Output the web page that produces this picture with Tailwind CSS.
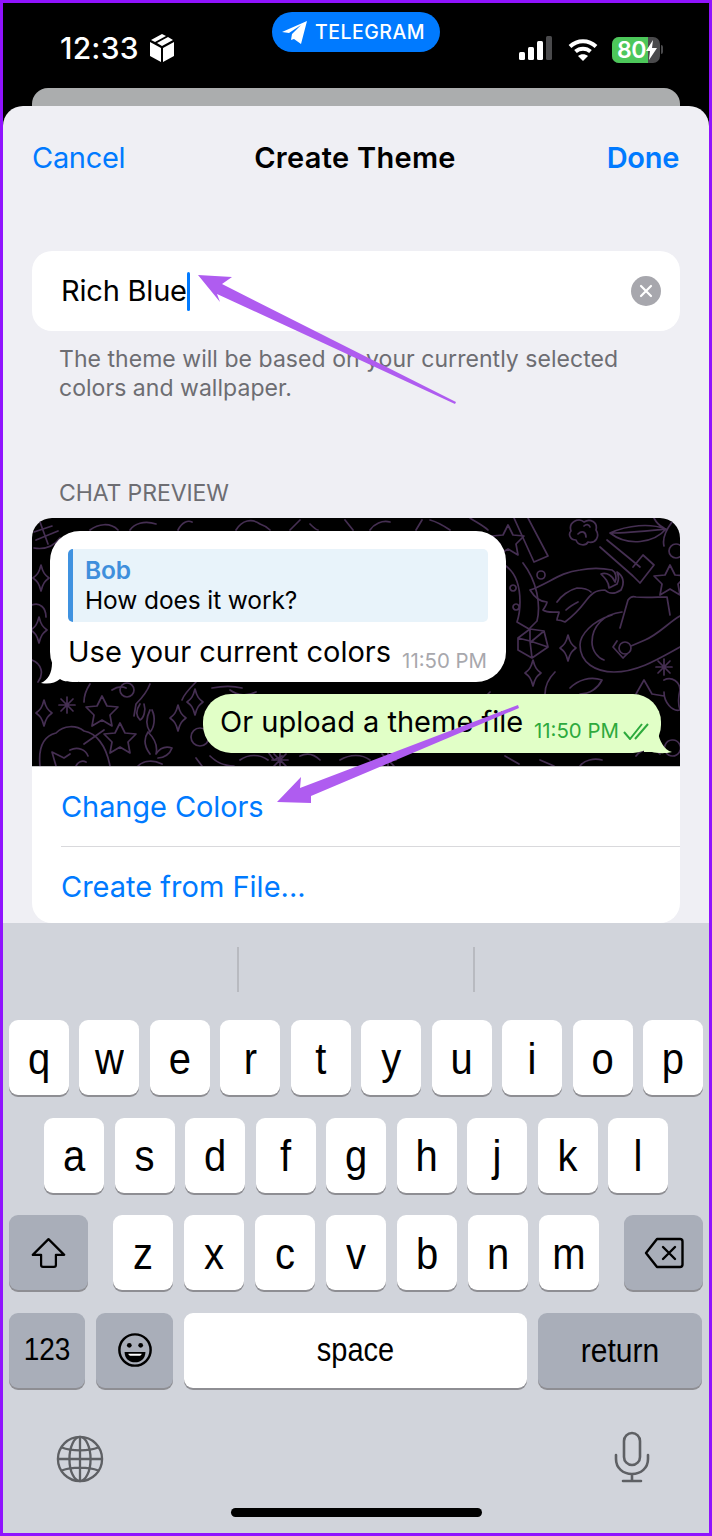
<!DOCTYPE html>
<html lang="en">
<head>
    <meta charset="UTF-8">
    <title>Create Theme</title>
    <script src="https://cdn.jsdelivr.net/npm/@tailwindcss/browser@4"></script>
</head>
<body class="bg-black">
<div class="relative w-[712px] h-[1536px] overflow-hidden border-[3px] border-[#9013FE] bg-black flex flex-col font-['Inter',sans-serif]">

    <!-- status bar -->
    <div class="relative h-[85px] shrink-0 text-white">
        <div class="absolute left-[57px] top-[25px] flex items-center gap-[10px]">
            <span class="text-[30px] leading-[40px] font-medium tracking-[0.2px]">12:33</span>
            <svg width="26" height="28" viewBox="0 0 26 28" fill="#fff"><path d="M13 0l4 2-11 6-4-2zM19 3l5 3-11 6-5-3zM1 8l11 6v14L1 22zM25 8v14l-11 6V14z"/></svg>
        </div>
        <div class="absolute left-[269px] top-[9px] w-[168px] h-[40px] rounded-[20px] bg-[#007AFF] flex items-center pl-[9px] gap-[8px]">
            <svg width="26" height="26" viewBox="0 0 26 26" fill="#fff"><path d="M1 13L26 2 20 25l-7-5-3 1 1-6 9-9-12 8z"/></svg>
            <span class="text-[19.5px] leading-[24px] font-medium tracking-[0.5px]">TELEGRAM</span>
        </div>
        <div class="absolute left-[516px] top-[33px] flex items-end gap-[3px] h-[24px]">
            <div class="w-[6px] h-[8px] rounded-[1.5px] bg-white"></div>
            <div class="w-[6px] h-[13px] rounded-[1.5px] bg-white"></div>
            <div class="w-[6px] h-[19px] rounded-[1.5px] bg-white"></div>
            <div class="w-[6px] h-[24px] rounded-[1.5px] bg-[#4a4a4c]"></div>
        </div>
        <svg class="absolute left-[565px] top-[35px]" width="30" height="23" viewBox="0 0 30 23" fill="none" stroke="#fff" stroke-width="4">
            <path d="M2 8.500C9.500 1.500 20.500 1.500 28 8.500"/><path d="M7.500 13.500C11.800 9.700 18.200 9.700 22.500 13.500"/><path d="M15 23l-5-5c2.800-2.300 7.200-2.300 10 0z" fill="#fff" stroke="none"/>
        </svg>
        <div class="absolute left-[609px] top-[34px] w-[48px] h-[26px] rounded-[7px] overflow-hidden bg-[#4a4a4c] flex">
            <div class="w-[36px] bg-[#4CC75A]"></div>
            <span class="absolute left-[5px] top-0 text-[23px] leading-[26px] font-semibold tracking-[-0.5px]">80</span>
            <svg class="absolute left-[34px] top-[3px]" width="11" height="20" viewBox="0 0 11 20" fill="#fff"><path d="M7 0L0 11h4l-1 9 8-12H6z"/></svg>
        </div>
        <div class="absolute left-[658px] top-[42px] w-[2px] h-[9px] rounded-r-[2px] bg-[#4a4a4c]"></div>
    </div>

    <!-- card behind the sheet -->
    <div class="h-[19px] shrink-0 mx-[29px] rounded-t-[16px] bg-[#ABADAE]"></div>

    <!-- sheet -->
    <div class="h-[817px] shrink-0 -mt-px rounded-t-[20px] bg-[#EFEFF4] overflow-hidden flex flex-col">
        <div class="grid grid-cols-[1fr_auto_1fr] items-center pl-[29px] pr-[30px] pt-[3px] h-[100px] text-[29px] shrink-0">
            <span class="text-[#007AFF] tracking-[-0.3px]">Cancel</span>
            <span class="font-semibold text-black tracking-[0.3px] -ml-px">Create Theme</span>
            <span class="justify-self-end text-[#007AFF] font-semibold tracking-[-0.3px]">Done</span>
        </div>
        <div class="mt-[45px] mx-[29px] h-[80px] shrink-0 rounded-[20px] bg-white flex items-center pl-[29px] pr-[19px]">
            <span class="text-[29px] text-black tracking-[-0.2px]">Rich Blue</span>
            <div class="w-[3px] h-[39px] rounded-full bg-[#007AFF]"></div>
            <div class="ml-auto w-[30px] h-[30px] rounded-full bg-[#A7A7AD] flex items-center justify-center">
                <svg width="14" height="14" viewBox="0 0 14 14" stroke="#fff" stroke-width="2.200" stroke-linecap="round"><path d="M2 2l10 10M12 2L2 12"/></svg>
            </div>
        </div>
        <p class="mt-[14px] mx-[56px] text-[23px] leading-[29px] tracking-[0.04px] text-[#6D6D72]">The theme will be based on your currently selected<br>colors and wallpaper.</p>
        <div class="mt-[76px] ml-[56px] text-[23px] leading-[29px] tracking-[-0.1px] text-[#6D6D72]">CHAT PREVIEW</div>

        <div class="mt-[10px] mx-[29px] rounded-[20px] bg-white overflow-hidden shrink-0 h-[405px] flex flex-col">
            <!-- wallpaper with bubbles -->
            <div class="relative h-[249px] bg-black shrink-0 overflow-hidden border-b border-[#c6c6c8]">
                <svg class="absolute left-0 top-0" width="648" height="248" viewBox="32 518 648 248" fill="none" stroke="#452F52" stroke-width="1.700" stroke-linejoin="round" stroke-linecap="round">
                    <defs>
                        <path id="spark" d="M0-13C2-5 4-3 8 0 4 3 2 5 0 13-2 5-4 3-8 0-4-3-2-5 0-13z"/>
                        <path id="star" d="M0-15L5-5 16-4 8 4 10 15 0 9-10 15-8 4-16-4-5-5z"/>
                        <path id="ast" d="M-8 0H8M0-8V8M-6-6L6 6M6-6L-6 6"/>
                    </defs>
                    <!-- left side -->
                    <path d="M34 532l18-6M36 540l22-9M40 522l8 22M34 548c12 2 20-2 26-10"/>
                    <use href="#spark" x="41" y="578"/><use href="#spark" x="39" y="630"/>
                    <path d="M32 605c8-3 14 3 14 12M32 660c10 4 12 14 6 22"/>
                    <use href="#ast" x="67" y="705"/><use href="#star" x="102" y="711"/><use href="#spark" x="44" y="713"/>
                    <use href="#spark" x="195" y="702"/><use href="#spark" x="178" y="718"/><use href="#star" x="120" y="738"/>
                    <circle cx="127" cy="690" r="7"/>
                    <path d="M40 766c-2-20 4-30 16-33 8-8 20-8 28-2 12 2 22 14 26 35M84 744l20-14"/>
                    <path d="M56 766l-4-14 12 6 6-4M70 750c8-4 16 0 18 6M76 766c2-4 6-6 10-4"/>
                    <path d="M138 766c6-6 16-6 24-2M150 754c-6-8-6-16-2-22 6 6 10 14 8 22 4-6 10-8 16-6-2 6-8 10-14 10"/>
                    <path d="M150 684c-3 8-8 14-14 20l-2 12M140 704c-4 6-4 12 0 16 4-2 6-10 4-16M150 710c-4 8-4 16 0 22 4-4 6-14 2-22"/>
                    <path d="M196 682c-6 6-12 12-14 18M90 684c-4 6-6 12-6 18"/>
                    <path d="M112 690c6-4 10-4 14-2M212 688c10-2 22-2 30 0M230 690c8 6 18 6 26 2"/>
                    <circle cx="200" cy="737" r="9"/>
                    <path d="M205 726c4-8 12-14 24-12M210 756c6 6 14 10 24 10M240 760c8-6 20-6 28 0M268 752l6 8 8-4M196 758l6 8M300 756c8-4 14-2 20 4M340 760c10-6 22-6 30 0"/>
                    <use href="#ast" x="280" y="760"/><use href="#ast" x="388" y="760"/>
                    <!-- top strip behind the white bubble -->
                    <path d="M90 530c8-6 20-8 28 0M130 530c4-6 14-10 26-6M178 530c4-8 10-10 14-8M236 530c6-10 16-12 24-6 6 2 8 4 10 6M290 530l10-10M310 524c4 4 6 6 8 6M345 520l8 10M370 530c4-6 12-10 20-8M416 530l6-10M430 520c8 2 14 6 20 10M470 518c6 4 14 8 18 12"/>
                    <!-- right side: horseshoe, key, leaf, wing, hat, gem -->
                    <use href="#star" x="508" y="540"/>
                    <path d="M514 518l20 44 14-6-20-38"/>
                    <path d="M506 566c8 6 14 18 14 36 0 8-1 14-3 20l12 7 8-8c4-16 0-40-14-58M513 585a3 3 0 1 0 .1 0zM516 604a3 3 0 1 0 .1 0z"/>
                    <path d="M571 531c-3-9 8-14 13-9 6-4 14 0 12 8 4 6 0 14-8 12-2 4-10 4-12-2-6 0-8-6-5-9zM578 534c4-4 8-2 8 3M584 526c2-2 5-2 6 1"/>
                    <path d="M600 547l33 29M607 540l33 27M633 567l10-12 11 10-14 18-7-7"/>
                    <path d="M610 533c18-8 40-10 56-4-12 14-38 18-56 4zM610 533c18 0 36-2 56-4M672 522c-6 8-10 16-8 24M654 518c2 4 6 8 10 10"/>
                    <use href="#star" x="670" y="580"/>
                    <circle cx="541" cy="575" r="4"/>
                    <circle cx="676" cy="551" r="7"/>
                    <path d="M530 590c18-6 30-18 50-20 10-2 22-2 32 0 4 2 5 8 3 12-2-6-8-10-14-8 4 4 8 8 8 14l8-4c2-4 2-8 0-12 6 4 8 10 4 18-6 4-12 4-16 0-10 0-14 4-20 12-6 8-12 14-20 20-4-2-6-2-8-2 0-3 2-6 2-8-6 0-12 1-16-2 2-3 4-6 4-8-6 0-12-4-17-12z"/>
                    <path d="M557 602c4-6 12-12 20-14 6 0 12 2 14 4M566 610c4-4 8-6 12-8"/>
                    <path d="M620 628l8-28c2-3 5-4 8-3 10 1 22 0 31 0l3 18M612 615c-20 6-32 20-32 30 0 18 16 27 34 27 24 0 46-14 66-25M622 612c-18 2-30 14-30 30 0 9 6 16 12 18M617 641l-4 6 10 11 4-4M631 646l14-6c14-6 24-18 35-24"/>
                    <circle cx="625" cy="648" r="6"/>
                    <path d="M518 638l12-9 14 2 4 16-16 11-14-8zM518 638l12 3 18 6M530 629v12l2 17M544 631l-12 10"/>
                    <use href="#spark" x="568" y="648"/><use href="#spark" x="533" y="673"/>
                    <use href="#ast" x="664" y="667"/>
                    <path d="M555 672c-6 6-10 14-10 22M570 688c8-8 20-12 32-8-4 8-12 14-22 14M664 680c8-4 16 2 16 10-2 8-2 14 0 20-8 2-16-8-16-18M636 694l8-14 8 14 12 2M490 692c-6 6-8 8-10 14"/>
                    <path d="M636 756c6-8 18-8 24-2M580 766c4-6 14-8 22-6M540 760l14 6M505 756l14 8M672 740a8 8 0 1 0 1 0z"/>
                </svg>

                <!-- incoming bubble -->
                <div class="absolute left-[18px] top-[13px] w-[456px] h-[151px] rounded-[30px] bg-white pt-[18px] px-[18px]">
                    <div class="relative h-[73px] rounded-[5px] overflow-hidden bg-[#E8F3FA] border-l-[5px] border-[#3F92E0] pl-[12px] pt-[6px] text-[24.5px] leading-[30px] tracking-[-0.1px] text-black">
                        <div class="font-semibold text-[#3F8FDC]">Bob</div>
                        <div>How does it work?</div>
                    </div>
                    <div class="mt-[11px] flex items-end">
                        <span class="text-[29px] leading-[38px] text-black">Use your current colors</span>
                        <span class="ml-auto relative top-[3px] text-[20.4px] leading-[26px] text-[#A8A8AD] mr-[1px]">11:50 PM</span>
                    </div>
                </div>
                <svg class="absolute left-[8px] top-[145px]" width="40" height="22" viewBox="0 0 40 22" fill="#fff"><path d="M12 0C12 10 8 17 1 20 9 21.500 15 20 20 16c4 3 10 3 18 3V0z"/></svg>

                <!-- outgoing bubble -->
                <div class="absolute left-[171px] top-[176px] w-[458px] h-[59px] rounded-[28px] bg-[#E1FFC7] pl-[17px] pb-[3px] flex items-center">
                    <span class="text-[29px] leading-[38px] text-black">Or upload a theme file</span>
                    <span class="absolute left-[331px] top-[24px] text-[20.4px] leading-[26px] text-[#2DAA3D]">11:50 PM</span>
                    <svg class="absolute left-[420px] top-[28px]" width="26" height="18" viewBox="0 0 26 18" fill="none" stroke="#2DAA3D" stroke-width="2"><path d="M1 10l6 7L19 2M12 17L25 2"/></svg>
                </div>
                <svg class="absolute left-[612px] top-[214px]" width="30" height="24" viewBox="0 0 30 24" fill="#E1FFC7"><path d="M0 0H14C15 8 20 18 28 20 20 22 12 21 8 20H0z"/></svg>
            </div>
            <div class="h-[79px] shrink-0 flex items-center pl-[29px] text-[29px] text-[#007AFF] tracking-[-0.1px]">Change Colors</div>
            <div class="h-px shrink-0 ml-[29px] bg-[#D9D9DC]"></div>
            <div class="flex-1 flex items-center pl-[29px] pt-[4px] text-[29px] text-[#007AFF]">Create from File...</div>
        </div>
    </div>

    <!-- keyboard -->
    <div class="flex-1 bg-[#D1D4DB] relative flex flex-col">
        <div class="h-[97px] shrink-0 pt-[24px] flex justify-center gap-[234px]">
            <div class="w-[2px] h-[45px] bg-[#B8BAC0]"></div>
            <div class="w-[2px] h-[45px] bg-[#B8BAC0]"></div>
        </div>
        <div class="flex flex-col gap-[22.6px] px-[6px] text-[40px] text-black font-['Liberation_Sans',sans-serif] [&_span]:scale-y-[1.12]">
            <div class="flex justify-between">
                <div class="w-[60px] h-[75px] rounded-[9px] bg-white shadow-[0_2px_0_#8E8E93] flex items-center justify-center"><span>q</span></div>
                <div class="w-[60px] h-[75px] rounded-[9px] bg-white shadow-[0_2px_0_#8E8E93] flex items-center justify-center"><span>w</span></div>
                <div class="w-[60px] h-[75px] rounded-[9px] bg-white shadow-[0_2px_0_#8E8E93] flex items-center justify-center"><span>e</span></div>
                <div class="w-[60px] h-[75px] rounded-[9px] bg-white shadow-[0_2px_0_#8E8E93] flex items-center justify-center"><span>r</span></div>
                <div class="w-[60px] h-[75px] rounded-[9px] bg-white shadow-[0_2px_0_#8E8E93] flex items-center justify-center"><span>t</span></div>
                <div class="w-[60px] h-[75px] rounded-[9px] bg-white shadow-[0_2px_0_#8E8E93] flex items-center justify-center"><span>y</span></div>
                <div class="w-[60px] h-[75px] rounded-[9px] bg-white shadow-[0_2px_0_#8E8E93] flex items-center justify-center"><span>u</span></div>
                <div class="w-[60px] h-[75px] rounded-[9px] bg-white shadow-[0_2px_0_#8E8E93] flex items-center justify-center"><span>i</span></div>
                <div class="w-[60px] h-[75px] rounded-[9px] bg-white shadow-[0_2px_0_#8E8E93] flex items-center justify-center"><span>o</span></div>
                <div class="w-[60px] h-[75px] rounded-[9px] bg-white shadow-[0_2px_0_#8E8E93] flex items-center justify-center"><span>p</span></div>
            </div>
            <div class="flex justify-between px-[35px]">
                <div class="w-[60px] h-[75px] rounded-[9px] bg-white shadow-[0_2px_0_#8E8E93] flex items-center justify-center"><span>a</span></div>
                <div class="w-[60px] h-[75px] rounded-[9px] bg-white shadow-[0_2px_0_#8E8E93] flex items-center justify-center"><span>s</span></div>
                <div class="w-[60px] h-[75px] rounded-[9px] bg-white shadow-[0_2px_0_#8E8E93] flex items-center justify-center"><span>d</span></div>
                <div class="w-[60px] h-[75px] rounded-[9px] bg-white shadow-[0_2px_0_#8E8E93] flex items-center justify-center"><span>f</span></div>
                <div class="w-[60px] h-[75px] rounded-[9px] bg-white shadow-[0_2px_0_#8E8E93] flex items-center justify-center"><span>g</span></div>
                <div class="w-[60px] h-[75px] rounded-[9px] bg-white shadow-[0_2px_0_#8E8E93] flex items-center justify-center"><span>h</span></div>
                <div class="w-[60px] h-[75px] rounded-[9px] bg-white shadow-[0_2px_0_#8E8E93] flex items-center justify-center"><span>j</span></div>
                <div class="w-[60px] h-[75px] rounded-[9px] bg-white shadow-[0_2px_0_#8E8E93] flex items-center justify-center"><span>k</span></div>
                <div class="w-[60px] h-[75px] rounded-[9px] bg-white shadow-[0_2px_0_#8E8E93] flex items-center justify-center"><span>l</span></div>
            </div>
            <div class="flex justify-between">
                <div class="w-[79px] h-[75px] rounded-[9px] bg-[#A9AEB9] shadow-[0_2px_0_#8E8E93] flex items-center justify-center">
                    <svg width="37" height="32" viewBox="0 0 40 34" fill="none" stroke="#000" stroke-width="2.400" stroke-linejoin="round"><path d="M20 2L3 19h9v11a2 2 0 0 0 2 2h12a2 2 0 0 0 2-2V19h9z"/></svg>
                </div>
                <div class="flex gap-[11px]">
                    <div class="w-[60px] h-[75px] rounded-[9px] bg-white shadow-[0_2px_0_#8E8E93] flex items-center justify-center"><span>z</span></div>
                    <div class="w-[60px] h-[75px] rounded-[9px] bg-white shadow-[0_2px_0_#8E8E93] flex items-center justify-center"><span>x</span></div>
                    <div class="w-[60px] h-[75px] rounded-[9px] bg-white shadow-[0_2px_0_#8E8E93] flex items-center justify-center"><span>c</span></div>
                    <div class="w-[60px] h-[75px] rounded-[9px] bg-white shadow-[0_2px_0_#8E8E93] flex items-center justify-center"><span>v</span></div>
                    <div class="w-[60px] h-[75px] rounded-[9px] bg-white shadow-[0_2px_0_#8E8E93] flex items-center justify-center"><span>b</span></div>
                    <div class="w-[60px] h-[75px] rounded-[9px] bg-white shadow-[0_2px_0_#8E8E93] flex items-center justify-center"><span>n</span></div>
                    <div class="w-[60px] h-[75px] rounded-[9px] bg-white shadow-[0_2px_0_#8E8E93] flex items-center justify-center"><span>m</span></div>
                </div>
                <div class="w-[79px] h-[75px] rounded-[9px] bg-[#A9AEB9] shadow-[0_2px_0_#8E8E93] flex items-center justify-center">
                    <svg width="40" height="32" viewBox="0 0 40 32" fill="none" stroke="#000" stroke-width="2.400" stroke-linejoin="round" stroke-linecap="round"><path d="M13 2h23a2.500 2.500 0 0 1 2.500 2.500v23a2.500 2.500 0 0 1-2.500 2.500H13L2 16z"/><path d="M19 10l12 12M31 10L19 22"/></svg>
                </div>
            </div>
            <div class="flex gap-[11px] text-[29px]">
                <div class="w-[76px] h-[75px] rounded-[9px] bg-[#A9AEB9] shadow-[0_2px_0_#8E8E93] flex items-center justify-center text-[28px]"><span>123</span></div>
                <div class="w-[77px] h-[75px] rounded-[9px] bg-[#A9AEB9] shadow-[0_2px_0_#8E8E93] flex items-center justify-center">
                    <svg width="36" height="36" viewBox="0 0 38 38" fill="none" stroke="#000" stroke-width="2.600"><circle cx="19" cy="19" r="16.500"/><circle cx="13" cy="14" r="2.500" fill="#000" stroke="none"/><circle cx="25" cy="14" r="2.500" fill="#000" stroke="none"/><path d="M8 21h22c0 7-5 11-11 11S8 28 8 21z" fill="#000" stroke="none"/><path d="M12 23h14c0 1-1 2-2 2H14c-1 0-2-1-2-2z" fill="#fff" stroke="none"/></svg>
                </div>
                <div class="w-[343px] h-[75px] rounded-[9px] bg-white shadow-[0_2px_0_#8E8E93] flex items-center justify-center"><span>space</span></div>
                <div class="w-[164px] h-[75px] rounded-[9px] bg-[#A9AEB9] shadow-[0_2px_0_#8E8E93] flex items-center justify-center text-[30px]"><span>return</span></div>
            </div>
        </div>
        <div class="absolute left-[53px] top-[512px]">
            <svg width="48" height="48" viewBox="0 0 50 50" fill="none" stroke="#5E6064" stroke-width="2.400"><circle cx="25" cy="25" r="23"/><ellipse cx="25" cy="25" rx="11" ry="23"/><path d="M25 2v46M2 25h46M6 13c10 4 28 4 38 0M6 37c10-4 28-4 38 0"/></svg>
        </div>
        <div class="absolute left-[611px] top-[508px]">
            <svg width="36" height="52" viewBox="0 0 36 52" fill="none" stroke="#5E6064" stroke-width="2.600" stroke-linecap="round"><rect x="10" y="2" width="16" height="32" rx="8"/><path d="M2 24v4c0 9 7 15 16 15s16-6 16-15v-4M18 43v7M9 50h18"/></svg>
        </div>
        <div class="absolute left-[228px] bottom-[16px] w-[251px] h-[9px] rounded-full bg-black"></div>
    </div>

    <!-- annotation arrows -->
    <svg class="absolute -left-[3px] -top-[3px] pointer-events-none" width="712" height="1536" viewBox="0 0 712 1536" fill="#AF5CF0">
        <path d="M198 275L232 277 222 284 456 402 455 404 217 294 220 302z"/>
        <path d="M277 802L301 777 300 788 518 705 519 708 311 796 311 803z"/>
    </svg>
</div>
</body>
</html>
